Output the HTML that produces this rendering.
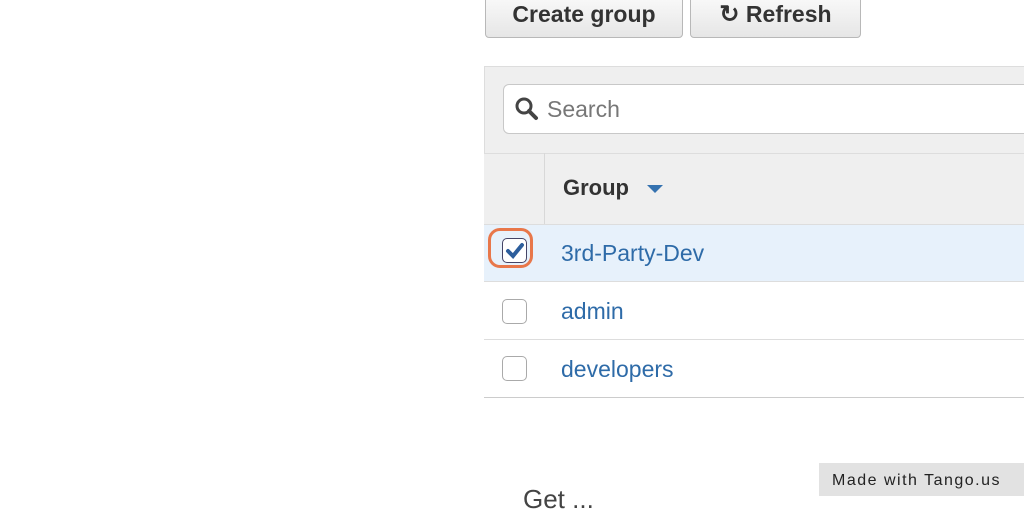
<!DOCTYPE html>
<html><head><style>
body{margin:0;width:1024px;height:496px;overflow:hidden;background:#fff;font-family:"Liberation Sans",Arial,sans-serif;position:relative}
.btn{position:absolute;top:-6px;height:44px;border:1px solid #b8b8b8;border-radius:4px;background:linear-gradient(#fafafa,#e6e6e6);font-weight:bold;font-size:23px;color:#333;box-sizing:border-box;line-height:38px;text-align:center}
.panel{position:absolute;left:484px;top:66px;width:560px;height:158px;background:#efefef;border-top:1px solid #ddd;border-left:1px solid #ddd}
.search{position:absolute;left:503px;top:84px;width:540px;height:50px;background:#fff;border:1px solid #c8c8c8;border-radius:6px;box-sizing:border-box}
.row{position:absolute;left:484px;width:540px;border-bottom:1px solid #ddd;box-sizing:border-box}
.cb{position:absolute;left:502px;width:25px;height:25px;border:1px solid #aaa;border-radius:5px;background:#fff;box-sizing:border-box}
.lnk{position:absolute;left:561px;font-size:23px;color:#2e6ba8}
</style></head><body>
<div class="btn" style="left:485px;width:198px">Create group</div>
<div class="btn" style="left:690px;width:171px"><span style="font-size:24px">&#x21bb;</span> Refresh</div>
<div class="panel"></div>
<div class="search"></div>
<svg style="position:absolute;left:514px;top:96px" width="26" height="26" viewBox="0 0 26 26"><circle cx="10" cy="10" r="7" fill="none" stroke="#444" stroke-width="3"/><path d="M15 15l7 7" stroke="#444" stroke-width="4" stroke-linecap="round"/></svg>
<div style="position:absolute;left:547px;top:96px;font-size:23px;color:#777">Search</div>
<div style="position:absolute;left:484px;top:153px;width:540px;height:71px;border-top:1px solid #ddd;background:#efefef"></div>
<div style="position:absolute;left:544px;top:153px;width:1px;height:71px;background:#d8d8d8"></div>
<div style="position:absolute;left:563px;top:175px;font-size:22px;font-weight:bold;color:#333">Group</div>
<svg style="position:absolute;left:647px;top:184px" width="16" height="10"><path d="M0 1h16L8 9z" fill="#3572b0"/></svg>
<div class="row" style="top:224px;height:58px;background:#e7f1fb;border-top:1px solid #ddd"></div>
<div class="row" style="top:282px;height:58px"></div>
<div class="row" style="top:340px;height:58px;border-bottom-color:#ccc"></div>
<div class="cb" style="top:238px;border-color:#446"></div>
<svg style="position:absolute;left:504px;top:241px" width="22" height="20"><path d="M4 10l5 5 9-11" fill="none" stroke="#2c5e9c" stroke-width="4" stroke-linecap="round"/></svg>
<div style="position:absolute;left:488px;top:228px;width:45px;height:40px;border:3px solid #e8774a;border-radius:12px;box-sizing:border-box"></div>
<div class="cb" style="top:299px"></div>
<div class="cb" style="top:356px"></div>
<div class="lnk" style="top:240px">3rd-Party-Dev</div>
<div class="lnk" style="top:298px">admin</div>
<div class="lnk" style="top:356px">developers</div>
<div style="position:absolute;left:523px;top:484px;font-size:26px;color:#444">Get ...</div>
<div style="position:absolute;left:819px;top:463px;width:205px;height:33px;background:#e2e2e2;font-size:16px;letter-spacing:1.5px;color:#222;line-height:36px;padding-left:13px;box-sizing:border-box">Made with Tango.us</div>
</body></html>
